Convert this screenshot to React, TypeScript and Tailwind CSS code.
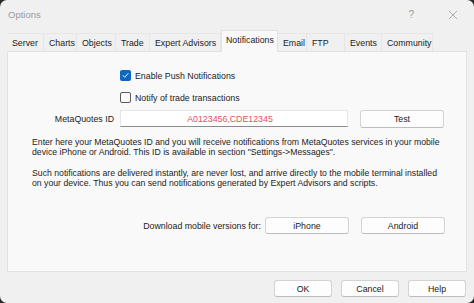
import React from 'react'

const tabs = [
  { label: 'Server', w: 'w-[37px]' },
  { label: 'Charts', w: 'w-[33px]' },
  { label: 'Objects', w: 'w-[39px]' },
  { label: 'Trade', w: 'w-[34px]' },
  { label: 'Expert Advisors', w: 'w-[71px]' },
  { label: 'Notifications', w: 'w-[57px]', active: true },
  { label: 'Email', w: 'w-[29px]' },
  { label: 'FTP', w: 'w-[38px]' },
  { label: 'Events', w: 'w-[37px]' },
  { label: 'Community', w: 'w-[51px]' },
]

function Button({ label, className }: { label: string; className: string }) {
  return (
    <button
      className={`flex items-center justify-center rounded-[3px] border border-[#d3d3d3] border-b-[#bdbdbd] bg-[#fdfdfd] text-[#1b1b1b] ${className}`}
    >
      {label}
    </button>
  )
}

function Checkbox({ checked, label }: { checked?: boolean; label: string }) {
  return (
    <div className="flex h-[11px] items-center gap-[4px]">
      {checked ? (
        <span className="flex h-[11px] w-[11px] items-center justify-center rounded-[2px] bg-[#0a67c2]">
          <svg width="7" height="7" viewBox="0 0 8 8" fill="none">
            <path d="M1.3 4.2 3.1 6 6.8 1.9" stroke="white" strokeWidth="1.1" strokeLinecap="round" strokeLinejoin="round" />
          </svg>
        </span>
      ) : (
        <span className="h-[11px] w-[11px] rounded-[2px] border border-[#5a5a5a] bg-[#fbfbfb]" />
      )}
      <span>{label}</span>
    </div>
  )
}

export default function App() {
  return (
    <div className="h-[303px] w-[474px] bg-[#2a2a2a]">
      <div
        className="flex h-[303px] w-[474px] flex-col rounded-[7px] bg-[#f0f0f0] text-[8.8px] leading-[10px] text-[#1c1c1c]"
        style={{ fontFamily: '"Liberation Sans", Arial, sans-serif' }}
      >
        {/* Title bar */}
        <div className="flex h-[29px] items-center pl-[8px] pr-[16px] text-[9.5px] text-[#9b9b9b]">
          <span>Options</span>
          <span className="ml-auto mr-[34px] text-[10px]">?</span>
          <svg width="10" height="10" viewBox="0 0 10 10" stroke="#a6a6a6" strokeWidth="0.9">
            <path d="M1 1 9 9M9 1 1 9" />
          </svg>
        </div>

        {/* Tabs */}
        <div className="flex h-[22px] items-end pl-[7px]">
          {tabs.map((t) =>
            t.active ? (
              <div
                key={t.label}
                className={`${t.w} relative z-10 -mb-[1px] flex h-[22px] items-center border border-b-0 border-[#e2e2e2] bg-[#f9f9f9] pb-[3px] pl-[4px]`}
              >
                {t.label}
              </div>
            ) : (
              <div
                key={t.label}
                className={`${t.w} flex h-[18px] items-center border-r border-t border-[#e6e6e6] bg-[#f0f0f0] pl-[5px]`}
              >
                {t.label}
              </div>
            )
          )}
        </div>

        {/* Panel */}
        <div className="mx-[7px] flex h-[221px] flex-col border border-[#e2e2e2] bg-[#f9f9f9]">
          <div className="ml-[112px] mt-[18px] flex flex-col gap-[11px]">
            <Checkbox checked label="Enable Push Notifications" />
            <Checkbox label="Notify of trade transactions" />
          </div>

          <div className="mt-[7px] flex h-[17px] items-center">
            <span className="w-[106px] text-right">MetaQuotes ID</span>
            <div className="ml-[6px] flex h-[17px] w-[228px] items-center justify-center border border-[#e6e6e6] border-b-[#8a8a8a] bg-white pr-[8px] text-[#e4505c]">
              A0123456,CDE12345
            </div>
            <Button label="Test" className="ml-[12px] h-[18px] w-[84px]" />
          </div>

          <p className="ml-[24px] mt-[10px] whitespace-nowrap text-[8.7px] leading-[10px]">
            Enter here your MetaQuotes ID and you will receive notifications from MetaQuotes services in your mobile
            <br />
            device iPhone or Android. This ID is available in section "Settings-&gt;Messages".
          </p>

          <p className="ml-[24px] mt-[11px] whitespace-nowrap text-[8.7px] leading-[10px]">
            Such notifications are delivered instantly, are never lost, and arrive directly to the mobile terminal installed
            <br />
            on your device. Thus you can send notifications generated by Expert Advisors and scripts.
          </p>

          <div className="mt-[29px] flex h-[17px] items-center">
            <span className="w-[253px] text-right">Download mobile versions for:</span>
            <Button label="iPhone" className="ml-[4px] h-[17px] w-[84px]" />
            <Button label="Android" className="ml-[12px] h-[17px] w-[84px]" />
          </div>
        </div>

        {/* Footer */}
        <div className="mt-[8px] flex justify-end gap-[9px] pr-[8px]">
          <Button label="OK" className="h-[17px] w-[58px]" />
          <Button label="Cancel" className="h-[17px] w-[58px]" />
          <Button label="Help" className="h-[17px] w-[58px]" />
        </div>
      </div>
    </div>
  )
}
